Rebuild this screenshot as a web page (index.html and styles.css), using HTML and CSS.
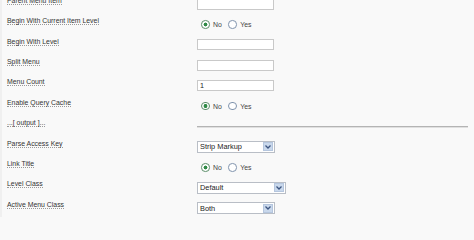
FILE: index.html
```html
<!DOCTYPE html>
<html>
<head>
<meta charset="utf-8">
<link rel="stylesheet" href="styles.css">
</head>
<body>
<div class="params">
  <div class="row">
    <div class="key"><span class="lbl">Parent Menu Item</span></div>
    <div class="val"><span class="text"></span></div>
  </div>
  <div class="row">
    <div class="key"><span class="lbl">Begin With Current Item Level</span></div>
    <div class="val radios">
      <span class="radio checked"></span><span class="rtxt">No</span>
      <span class="radio"></span><span class="rtxt">Yes</span>
    </div>
  </div>
  <div class="row">
    <div class="key"><span class="lbl">Begin With Level</span></div>
    <div class="val"><span class="text"></span></div>
  </div>
  <div class="row">
    <div class="key"><span class="lbl">Split Menu</span></div>
    <div class="val"><span class="text"></span></div>
  </div>
  <div class="row">
    <div class="key"><span class="lbl">Menu Count</span></div>
    <div class="val"><span class="text">1</span></div>
  </div>
  <div class="row">
    <div class="key"><span class="lbl">Enable Query Cache</span></div>
    <div class="val radios">
      <span class="radio checked"></span><span class="rtxt">No</span>
      <span class="radio"></span><span class="rtxt">Yes</span>
    </div>
  </div>
  <div class="row">
    <div class="key"><span class="lbl">...[ output ]...</span></div>
    <div class="val"><div class="rule"></div></div>
  </div>
  <div class="row">
    <div class="key"><span class="lbl">Parse Access Key</span></div>
    <div class="val">
      <div class="select"><span class="stxt">Strip Markup</span><span class="sbtn"><svg width="6" height="4" viewBox="0 0 6 4"><path d="M0.5 0.5 L3 3 L5.5 0.5" fill="none" stroke="#3d5580" stroke-width="1.3"/></svg></span></div>
    </div>
  </div>
  <div class="row">
    <div class="key"><span class="lbl">Link Title</span></div>
    <div class="val radios">
      <span class="radio checked"></span><span class="rtxt">No</span>
      <span class="radio"></span><span class="rtxt">Yes</span>
    </div>
  </div>
  <div class="row">
    <div class="key"><span class="lbl">Level Class</span></div>
    <div class="val">
      <div class="select wide"><span class="stxt">Default</span><span class="sbtn"><svg width="6" height="4" viewBox="0 0 6 4"><path d="M0.5 0.5 L3 3 L5.5 0.5" fill="none" stroke="#3d5580" stroke-width="1.3"/></svg></span></div>
    </div>
  </div>
  <div class="row">
    <div class="key"><span class="lbl">Active Menu Class</span></div>
    <div class="val">
      <div class="select"><span class="stxt">Both</span><span class="sbtn"><svg width="6" height="4" viewBox="0 0 6 4"><path d="M0.5 0.5 L3 3 L5.5 0.5" fill="none" stroke="#3d5580" stroke-width="1.3"/></svg></span></div>
    </div>
  </div>
</div>
</body>
</html>
```

FILE: styles.css
```css
html, body {
  margin: 0;
  padding: 0;
}
html {
  background: #f9f9f9;
}
body {
  font-family: "Liberation Sans", Arial, sans-serif;
  font-size: 6.9px;
  color: #333;
  width: 474px;
  height: 217px;
  overflow: hidden;
  border-left: 2px solid #f0f0f0;
  box-sizing: border-box;
}
.params {
  margin-top: -6px;
  width: 468px;
}
.row {
  display: grid;
  grid-template-columns: 195px 1fr;
  height: 20.4px;
}
.key {
  padding-left: 5px;
  padding-top: 2.8px;
  line-height: 8px;
}
.lbl {
  border-bottom: 1px dotted #9a9a9a;
}
.val {
  display: flex;
  align-items: center;
}
.text {
  display: block;
  box-sizing: border-box;
  width: 77px;
  height: 11px;
  background: #fff;
  border: 1px solid #c9c9c9;
  padding-left: 2px;
  line-height: 9px;
  font-size: 7.2px;
  color: #222;
}
.radios {
  padding-left: 4px;
}
.radio {
  display: block;
  box-sizing: border-box;
  width: 8.5px;
  height: 8.5px;
  border-radius: 50%;
  border: 1px solid #7f93ad;
  background: #fff;
}
.radio.checked {
  border-color: #5c8f6a;
  background: radial-gradient(circle, #2f8a45 0 1.7px, #fff 2.2px);
}
.rtxt {
  margin-left: 3.5px;
  margin-right: 6.5px;
  color: #444;
}
.rule {
  width: 271px;
  height: 0;
  border-top: 1px solid #b4b4b4;
  border-bottom: 1px solid #e0e0e0;
}
.select {
  box-sizing: border-box;
  width: 78px;
  height: 12px;
  background: #fff;
  border: 1px solid #b9bec6;
  display: flex;
  align-items: center;
  justify-content: space-between;
  padding: 0 1px 0 2px;
  color: #222;
  font-size: 7.4px;
}
.select.wide {
  width: 89px;
}
.sbtn {
  box-sizing: border-box;
  width: 10px;
  height: 9px;
  background: #c9d8ec;
  border: 1px solid #b5c6de;
  display: flex;
  align-items: center;
  justify-content: center;
}
```
